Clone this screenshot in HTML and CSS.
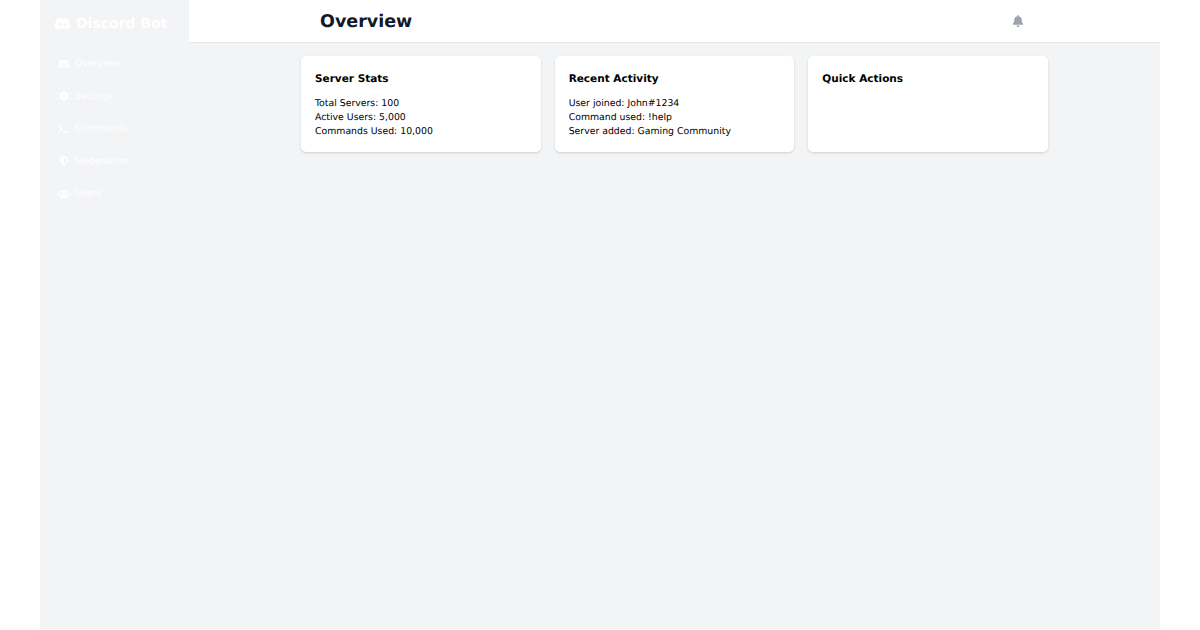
FILE: index.html
```html
<!DOCTYPE html>
<html lang="en">
<head>
  <meta charset="UTF-8">
  <title>Discord Bot Dashboard</title>
  <link rel="stylesheet" href="styles.css">
</head>
<body>
  <div class="app">
    <aside class="sidebar">
      <div class="brand">
        <svg class="brand-icon" viewBox="0 0 640 512"><path d="M524.531,69.836a1.5,1.5,0,0,0-.764-.7A485.065,485.065,0,0,0,404.081,32.03a1.816,1.816,0,0,0-1.923.91,337.461,337.461,0,0,0-14.9,30.6,447.848,447.848,0,0,0-134.426,0,309.541,309.541,0,0,0-15.135-30.6,1.89,1.89,0,0,0-1.924-.91A483.689,483.689,0,0,0,116.085,69.137a1.712,1.712,0,0,0-.788.676C39.068,183.651,18.186,294.69,28.43,404.354a2.016,2.016,0,0,0,.765,1.375A487.666,487.666,0,0,0,176.02,479.918a1.9,1.9,0,0,0,2.063-.676A348.2,348.2,0,0,0,208.12,430.4a1.86,1.86,0,0,0-1.019-2.588,321.173,321.173,0,0,1-45.868-21.853,1.885,1.885,0,0,1-.185-3.126c3.082-2.309,6.166-4.711,9.109-7.137a1.819,1.819,0,0,1,1.9-.256c96.229,43.917,200.41,43.917,295.5,0a1.812,1.812,0,0,1,1.924.233c2.944,2.426,6.027,4.851,9.132,7.16a1.884,1.884,0,0,1-.162,3.126,301.407,301.407,0,0,1-45.89,21.83,1.875,1.875,0,0,0-1,2.611,391.055,391.055,0,0,0,30.014,48.815,1.864,1.864,0,0,0,2.063.7A486.048,486.048,0,0,0,610.7,405.729a1.882,1.882,0,0,0,.765-1.352C623.729,277.594,590.933,167.465,524.531,69.836ZM222.491,337.58c-28.972,0-52.844-26.587-52.844-59.239S193.056,219.1,222.491,219.1c29.665,0,53.306,26.82,52.843,59.239C275.334,310.993,251.924,337.58,222.491,337.58Zm195.38,0c-28.971,0-52.843-26.587-52.843-59.239S388.437,219.1,417.871,219.1c29.667,0,53.307,26.82,52.844,59.239C470.715,310.993,447.538,337.58,417.871,337.58Z"/></svg>
        <span>Discord Bot</span>
      </div>
      <nav class="nav">
        <a class="nav-item">
          <svg class="nav-icon" viewBox="0 0 640 512"><path d="M524.531,69.836a1.5,1.5,0,0,0-.764-.7A485.065,485.065,0,0,0,404.081,32.03a1.816,1.816,0,0,0-1.923.91,337.461,337.461,0,0,0-14.9,30.6,447.848,447.848,0,0,0-134.426,0,309.541,309.541,0,0,0-15.135-30.6,1.89,1.89,0,0,0-1.924-.91A483.689,483.689,0,0,0,116.085,69.137a1.712,1.712,0,0,0-.788.676C39.068,183.651,18.186,294.69,28.43,404.354a2.016,2.016,0,0,0,.765,1.375A487.666,487.666,0,0,0,176.02,479.918a1.9,1.9,0,0,0,2.063-.676A348.2,348.2,0,0,0,208.12,430.4a1.86,1.86,0,0,0-1.019-2.588,321.173,321.173,0,0,1-45.868-21.853,1.885,1.885,0,0,1-.185-3.126c3.082-2.309,6.166-4.711,9.109-7.137a1.819,1.819,0,0,1,1.9-.256c96.229,43.917,200.41,43.917,295.5,0a1.812,1.812,0,0,1,1.924.233c2.944,2.426,6.027,4.851,9.132,7.16a1.884,1.884,0,0,1-.162,3.126,301.407,301.407,0,0,1-45.89,21.83,1.875,1.875,0,0,0-1,2.611,391.055,391.055,0,0,0,30.014,48.815,1.864,1.864,0,0,0,2.063.7A486.048,486.048,0,0,0,610.7,405.729a1.882,1.882,0,0,0,.765-1.352C623.729,277.594,590.933,167.465,524.531,69.836ZM222.491,337.58c-28.972,0-52.844-26.587-52.844-59.239S193.056,219.1,222.491,219.1c29.665,0,53.306,26.82,52.843,59.239C275.334,310.993,251.924,337.58,222.491,337.58Zm195.38,0c-28.971,0-52.843-26.587-52.843-59.239S388.437,219.1,417.871,219.1c29.667,0,53.307,26.82,52.844,59.239C470.715,310.993,447.538,337.58,417.871,337.58Z"/></svg>
          <span>Overview</span>
        </a>
        <a class="nav-item">
          <svg class="nav-icon" viewBox="0 0 512 512"><path d="M487.4 315.7l-42.6-24.6c4.3-23.2 4.3-47 0-70.2l42.6-24.6c4.900-2.800 7.100-8.600 5.500-14-11.100-35.600-30-67.800-54.700-94.600-3.800-4.100-10-5.100-14.800-2.300L380.800 110c-17.900-15.400-38.500-27.300-60.800-35.100V25.800c0-5.600-3.900-10.500-9.400-11.700-36.700-8.200-74.300-7.800-109.200 0-5.500 1.200-9.400 6.100-9.400 11.700V75c-22.200 7.900-42.800 19.800-60.800 35.100L88.700 85.500c-4.900-2.800-11-1.900-14.800 2.300-24.700 26.700-43.600 58.900-54.700 94.600-1.700 5.400.6 11.200 5.500 14L67.300 221c-4.300 23.200-4.300 47 0 70.200l-42.600 24.600c-4.900 2.800-7.100 8.600-5.500 14 11.100 35.600 30 67.800 54.700 94.600 3.800 4.100 10 5.100 14.800 2.300l42.600-24.600c17.900 15.400 38.500 27.300 60.800 35.100v49.200c0 5.600 3.900 10.500 9.400 11.700 36.700 8.200 74.300 7.800 109.200 0 5.500-1.200 9.400-6.100 9.400-11.700v-49.200c22.200-7.900 42.800-19.800 60.800-35.100l42.600 24.600c4.900 2.800 11 1.900 14.800-2.300 24.700-26.700 43.600-58.900 54.700-94.600 1.500-5.500-.7-11.300-5.600-14.100zM256 336c-44.100 0-80-35.900-80-80s35.900-80 80-80 80 35.900 80 80-35.900 80-80 80z"/></svg>
          <span>Settings</span>
        </a>
        <a class="nav-item">
          <svg class="nav-icon" viewBox="0 0 640 512"><path d="M257.981 272.971L63.638 467.314c-9.373 9.373-24.569 9.373-33.941 0L7.029 444.647c-9.357-9.357-9.375-24.522-.04-33.901L161.011 256 6.990 101.255c-9.335-9.379-9.317-24.544.04-33.901l22.667-22.667c9.373-9.373 24.569-9.373 33.941 0L257.981 239.030c9.373 9.372 9.373 24.568 0 33.941zM640 456v-32c0-13.255-10.745-24-24-24H312c-13.255 0-24 10.745-24 24v32c0 13.255 10.745 24 24 24h304c13.255 0 24-10.745 24-24z"/></svg>
          <span>Commands</span>
        </a>
        <a class="nav-item">
          <svg class="nav-icon" viewBox="0 0 512 512"><path fill-rule="evenodd" d="M256 0l210 80c8 180-50 350-210 432C96 430 38 260 46 80zM256 90v340c90-60 130-170 125-280z"/></svg>
          <span>Moderation</span>
        </a>
        <a class="nav-item">
          <svg class="nav-icon" viewBox="0 0 640 512"><path d="M96 224c35.300 0 64-28.700 64-64s-28.700-64-64-64-64 28.700-64 64 28.700 64 64 64zm448 0c35.300 0 64-28.700 64-64s-28.700-64-64-64-64 28.700-64 64 28.700 64 64 64zm32 32h-64c-17.600 0-33.500 7.100-45.100 18.600 40.300 22.100 68.900 62 75.100 109.400h66c17.700 0 32-14.300 32-32v-32c0-35.300-28.700-64-64-64zm-256 0c61.900 0 112-50.100 112-112S381.900 32 320 32 208 82.100 208 144s50.100 112 112 112zm76.800 32h-8.300c-20.800 10-43.900 16-68.500 16s-47.600-6-68.500-16h-8.300C179.600 288 128 339.600 128 403.200V432c0 26.500 21.500 48 48 48h288c26.500 0 48-21.500 48-48v-28.800c0-63.600-51.600-115.200-115.200-115.200zm-223.700-13.400C161.500 263.100 145.600 256 128 256H64c-35.300 0-64 28.700-64 64v32c0 17.700 14.300 32 32 32h65.900c6.300-47.400 34.900-87.300 75.200-109.400z"/></svg>
          <span>Users</span>
        </a>
      </nav>
    </aside>
    <div class="main">
      <header class="topbar">
        <h1>Overview</h1>
        <svg class="bell" viewBox="0 0 448 512"><path d="M224 512c35.320 0 63.970-28.650 63.970-64H160.030c0 35.350 28.650 64 63.970 64zm215.390-149.710c-19.320-20.760-55.470-51.990-55.470-154.290 0-77.700-54.480-139.900-127.940-155.160V32c0-17.670-14.320-32-31.980-32s-31.980 14.330-31.980 32v20.840C118.560 68.100 64.080 130.300 64.080 208c0 102.300-36.150 133.530-55.470 154.290-6 6.450-8.660 14.160-8.610 21.710.11 16.400 12.980 32 32.100 32h383.800c19.120 0 32-15.600 32.100-32 .05-7.550-2.610-15.270-8.610-21.710z"/></svg>
      </header>
      <section class="cards">
        <div class="card">
          <h2>Server Stats</h2>
          <p>Total Servers: 100</p>
          <p>Active Users: 5,000</p>
          <p>Commands Used: 10,000</p>
        </div>
        <div class="card">
          <h2>Recent Activity</h2>
          <p>User joined: John#1234</p>
          <p>Command used: !help</p>
          <p>Server added: Gaming Community</p>
        </div>
        <div class="card">
          <h2>Quick Actions</h2>
        </div>
      </section>
    </div>
  </div>
</body>
</html>
```

FILE: styles.css
```css
* {
  box-sizing: border-box;
}
body {
  margin: 0;
  background: white;
  font-family: "DejaVu Sans", sans-serif;
  text-rendering: geometricPrecision;
}
.app {
  display: flex;
  width: 1120px;
  height: 629px;
  margin: 0 auto;
  background: #F3F4F6;
}
.sidebar {
  width: 149px;
  flex-shrink: 0;
  padding: 15px 14px 14px;
  color: white;
}
.brand {
  display: flex;
  align-items: center;
  gap: 5px;
  height: 18px;
  font-size: 14px;
  font-weight: bold;
}
.brand-icon {
  width: 17px;
  height: 14px;
  fill: white;
}
.nav {
  margin-top: 14.3px;
}
.nav-item {
  display: flex;
  align-items: center;
  gap: 5.3px;
  height: 32.5px;
  padding-left: 4px;
  font-size: 9.33px;
}
.nav-icon {
  width: 11.7px;
  height: 10px;
  fill: white;
}
.main {
  flex: 1;
}
.topbar {
  display: flex;
  align-items: center;
  justify-content: space-between;
  height: 43px;
  padding: 0 136px 0 131px;
  background: white;
  border-bottom: 1px solid #E5E7EB;
}
h1 {
  margin: 2px 0 0;
  font-size: 17.5px;
  color: #111827;
}
.bell {
  width: 12px;
  height: 12px;
  fill: #9CA3AF;
}
.cards {
  display: grid;
  grid-template-columns: repeat(3, 1fr);
  gap: 14px;
  width: 747px;
  margin: 13px 0 0 112px;
}
.card {
  height: 96px;
  padding: 15px 14px 14px;
  background: white;
  border-radius: 5px;
  box-shadow: 0 1px 3px rgba(0, 0, 0, 0.1), 0 1px 2px rgba(0, 0, 0, 0.06);
}
h2 {
  margin: 0 0 10px;
  font-size: 10.5px;
  line-height: 16px;
  color: black;
}
.card p {
  margin: 0;
  font-size: 9.33px;
  line-height: 14px;
  color: black;
}
```
